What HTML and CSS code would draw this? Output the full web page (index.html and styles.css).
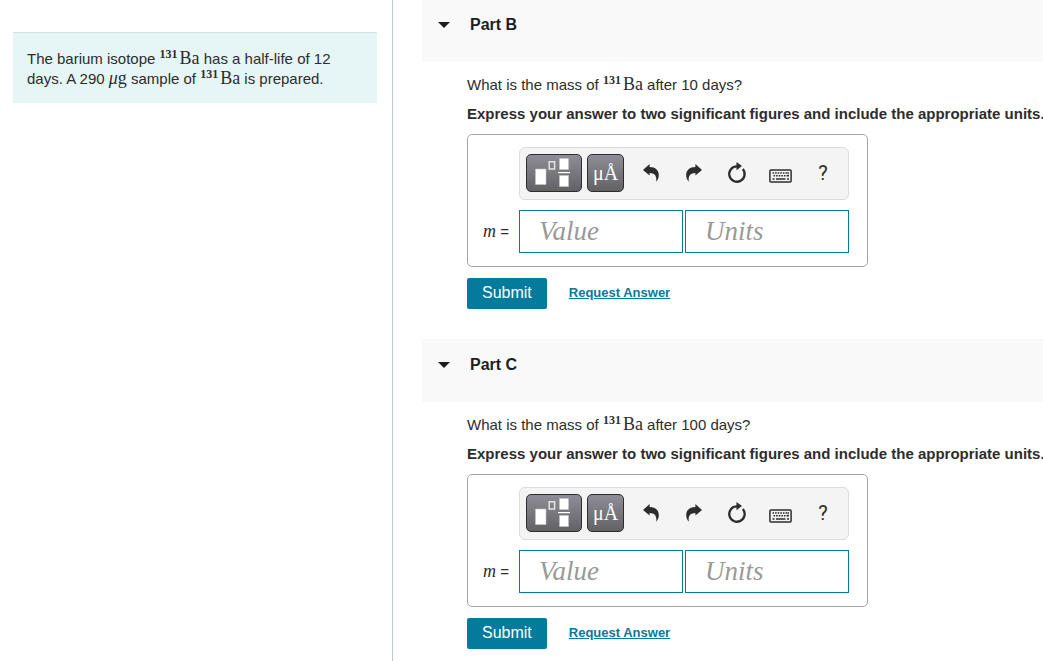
FILE: index.html
```html
<!DOCTYPE html>
<html lang="en">
<head>
<meta charset="utf-8">
<meta name="viewport" content="width=device-width, initial-scale=1">
<title>Half-life of barium</title>
<link rel="stylesheet" href="styles.css">
</head>
<body>
<svg class="sprite" aria-hidden="true">
  <symbol id="template" viewBox="1 1 54 36">
    <path fill="#fff" stroke="#c4c4c8" stroke-width=".6" d="M9.500 15h10.500v15.500H9.500zM33.500 4.500h9v11h-9zM33.500 21.500h9v11h-9z"/>
    <path fill="#fff" d="M32 18h12v1.200H32z"/>
    <path fill="none" stroke="#e4e4e6" stroke-width="1.500" d="M23.200 7.700h5.400v7.200h-5.400z"/>
  </symbol>
  <symbol id="undo" viewBox="0 0 16 18">
    <path fill="#2d2d2d" d="M0 6 6.600 0v3C12.500 3 15.800 6.300 15.800 11c0 2.800-.9 4.900-2.700 6.700.9-4.600-.6-8.700-6.500-8.700v2.500z"/>
  </symbol>
  <symbol id="reset" viewBox="0 0 20 22">
    <path fill="none" stroke="#2d2d2d" stroke-width="2.300" d="M15.800 7A7.700 7.700 0 1 1 10 4.300"/>
    <path fill="#2d2d2d" d="M9.500 0 15 4.100 9.500 8.200z"/>
  </symbol>
  <symbol id="keyboard" viewBox="0 0 23 14">
    <rect x=".9" y=".9" width="21.200" height="12.200" rx="1" fill="none" stroke="#2d2d2d" stroke-width="1.500"/>
    <path fill="none" stroke="#2d2d2d" stroke-width="1.500" stroke-dasharray="1.600 1" d="M3.500 4h15M4.500 6.800h14M19.200 3.200v4.500"/>
    <path fill="none" stroke="#2d2d2d" stroke-width="1.600" d="M3.500 10h2M7 10h9.500M18 10h2"/>
  </symbol>
</svg>
<div class="page">
  <aside class="intro">
    <p class="problem">The barium isotope <span class="math"><sup>131</sup>Ba</span> has a half-life of 12 days. A 290 <span class="math"><i>μ</i>g</span> sample of <span class="math"><sup>131</sup>Ba</span> is prepared.</p>
  </aside>
  <main class="parts">
    <section class="part">
      <h2 class="part-header"><button class="toggle" type="button"><span class="caret"></span>Part B</button></h2>
      <form class="part-body">
        <p class="question">What is the mass of <span class="math"><sup>131</sup>Ba</span> after 10 days?</p>
        <p class="instruction">Express your answer to two significant figures and include the appropriate units.</p>
        <div class="answer">
          <div class="toolbar">
            <button class="tool dark wide" type="button" aria-label="Templates"><svg class="template"><use href="#template"/></svg></button>
            <button class="tool dark" type="button" aria-label="Symbols">μÅ</button>
            <span class="commands">
              <button class="tool plain" type="button" aria-label="Undo"><svg class="arrow"><use href="#undo"/></svg></button>
              <button class="tool plain" type="button" aria-label="Redo"><svg class="arrow redo"><use href="#undo"/></svg></button>
              <button class="tool plain" type="button" aria-label="Reset"><svg class="reset"><use href="#reset"/></svg></button>
              <button class="tool plain" type="button" aria-label="Keyboard shortcuts"><svg class="keyboard"><use href="#keyboard"/></svg></button>
              <button class="tool plain" type="button" aria-label="Help">?</button>
            </span>
          </div>
          <label class="variable" for="value-b"><i class="math">m</i> =</label>
          <div class="fields">
            <input class="field" id="value-b" type="text" placeholder="Value">
            <input class="field" type="text" placeholder="Units" aria-label="Units">
          </div>
        </div>
        <div class="actions">
          <button class="submit" type="button">Submit</button>
          <a class="request" href="#">Request Answer</a>
        </div>
      </form>
    </section>
    <section class="part">
      <h2 class="part-header"><button class="toggle" type="button"><span class="caret"></span>Part C</button></h2>
      <form class="part-body">
        <p class="question">What is the mass of <span class="math"><sup>131</sup>Ba</span> after 100 days?</p>
        <p class="instruction">Express your answer to two significant figures and include the appropriate units.</p>
        <div class="answer">
          <div class="toolbar">
            <button class="tool dark wide" type="button" aria-label="Templates"><svg class="template"><use href="#template"/></svg></button>
            <button class="tool dark" type="button" aria-label="Symbols">μÅ</button>
            <span class="commands">
              <button class="tool plain" type="button" aria-label="Undo"><svg class="arrow"><use href="#undo"/></svg></button>
              <button class="tool plain" type="button" aria-label="Redo"><svg class="arrow redo"><use href="#undo"/></svg></button>
              <button class="tool plain" type="button" aria-label="Reset"><svg class="reset"><use href="#reset"/></svg></button>
              <button class="tool plain" type="button" aria-label="Keyboard shortcuts"><svg class="keyboard"><use href="#keyboard"/></svg></button>
              <button class="tool plain" type="button" aria-label="Help">?</button>
            </span>
          </div>
          <label class="variable" for="value-c"><i class="math">m</i> =</label>
          <div class="fields">
            <input class="field" id="value-c" type="text" placeholder="Value">
            <input class="field" type="text" placeholder="Units" aria-label="Units">
          </div>
        </div>
        <div class="actions">
          <button class="submit" type="button">Submit</button>
          <a class="request" href="#">Request Answer</a>
        </div>
      </form>
    </section>
  </main>
</div>
</body>
</html>
```

FILE: styles.css
```css
* { box-sizing: border-box; }
body {
  margin: 0;
  overflow-x: hidden;
  background: #fff;
  color: #2d2d2d;
  font: 15px/20px "Liberation Sans", Arial, sans-serif;
}
p, h2 { margin: 0; }
button, input { font: inherit; color: inherit; }
.sprite { display: none; }
.page {
  display: grid;
  grid-template-columns: minmax(0, 393fr) minmax(0, 650fr);
  min-height: 100vh;
}
.intro {
  padding: 32px 15px 0 13px;
  border-right: 1px solid #b9cbdb;
}
.problem {
  padding: 16px 30px 14px 14px;
  border-top: 1px solid #d5dfdf;
  background: #e6f6f6;
}
.math { font-family: "Liberation Serif", "Times New Roman", serif; font-size: 18px; line-height: 1; }
.math sup { margin-right: 2px; font-size: 12px; font-weight: bold; line-height: 0; vertical-align: 6px; }
.parts { margin-top: -1px; padding-left: 29px; }
.part-header {
  height: 63px;
  padding: 16px 16px 0;
  background: #f9f9f9;
}
.toggle {
  display: flex;
  align-items: center;
  gap: 20px;
  padding: 0;
  border: 0;
  background: none;
  font-size: 16px;
  font-weight: bold;
  line-height: 20px;
  color: #1e1e1e;
}
.caret {
  border: 6px solid transparent;
  border-top-color: #1e1e1e;
  border-bottom: 0;
}
.part-body { padding: 13px 0 0 45px; }
.part + .part { margin-top: 30px; }
.question { margin-bottom: 9px; }
.instruction { margin-bottom: 10px; font-weight: bold; white-space: nowrap; }
.answer {
  display: grid;
  grid-template-columns: 41px 330px;
  gap: 10px;
  width: fit-content;
  padding: 12px 18px 13px 0;
  border: 1px solid #a5a5a5;
  border-radius: 5px;
}
.toolbar {
  grid-column: 2;
  display: flex;
  align-items: flex-start;
  gap: 5px;
  height: 53px;
  padding: 6px;
  border: 1px solid #dcdcdc;
  border-radius: 6px;
  background: #f4f4f4;
}
.commands { display: flex; gap: 5px; margin-left: 3px; }
.tool { display: grid; place-items: center; height: 38px; padding: 0; border: 0; }
.dark {
  width: 38px;
  border: 1px solid #2d2d2d;
  border-radius: 5px;
  background: linear-gradient(#8f8d97, #626265);
  color: #fff;
  font: 20px/36px "Liberation Serif", serif;
}
.wide { width: 56px; }
.plain { width: 38px; background: none; font: 20px/36px Roboto, sans-serif; }
.template { width: 54px; height: 36px; }
.arrow { width: 16px; height: 18px; }
.redo { transform: scaleX(-1); }
.reset { width: 20px; height: 22px; }
.keyboard { width: 23px; height: 14px; margin-top: 6px; }
.variable { justify-self: end; align-self: center; white-space: nowrap; }
.fields { display: flex; gap: 2px; }
.field {
  flex: 1;
  min-width: 0;
  height: 43px;
  padding: 0 19px;
  border: 1px solid #047a9c;
  background: #fff;
  font: italic 27px/40px "Liberation Serif", serif;
}
.field::placeholder { color: #999; opacity: 1; }
.actions { display: flex; align-items: center; gap: 22px; margin-top: 11px; }
.submit {
  height: 31px;
  padding: 0 15px 2px;
  border: 0;
  border-radius: 2px;
  background: #047a9c;
  color: #fff;
  font-size: 16px;
}
.request { padding-bottom: 2px; color: #047a9c; font-size: 13px; font-weight: bold; }
```
